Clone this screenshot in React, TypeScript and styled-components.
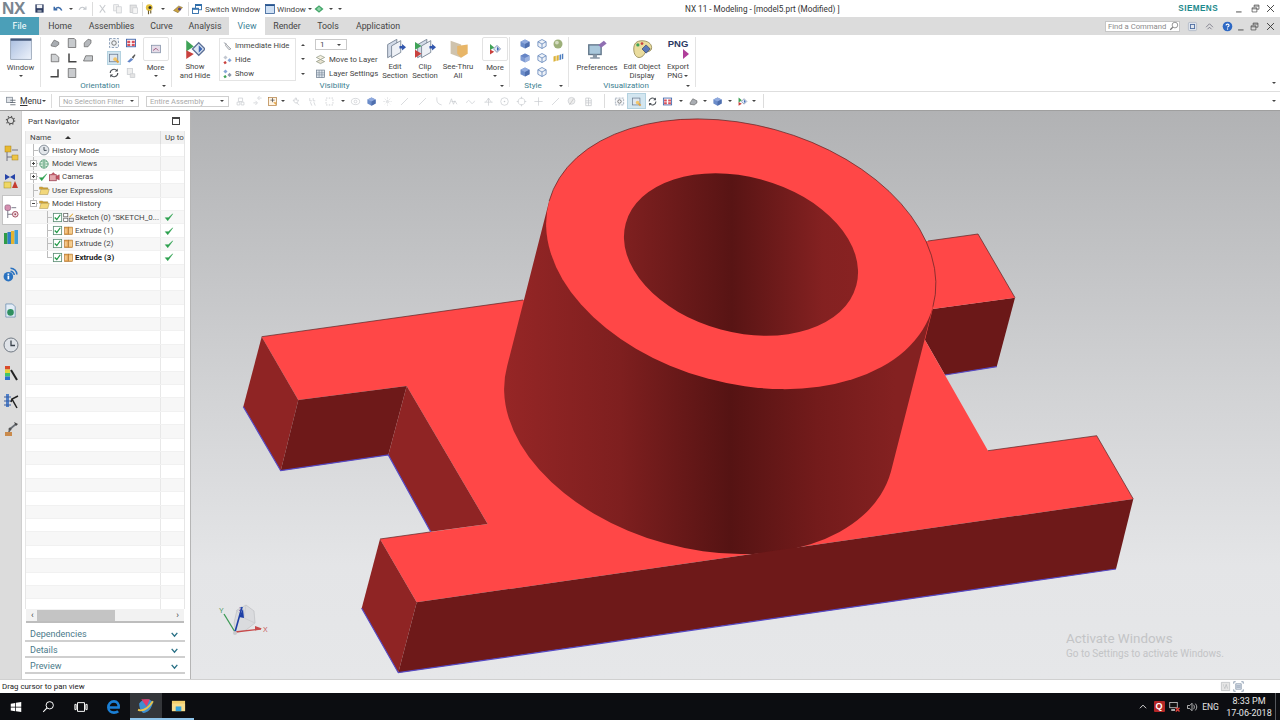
import React from 'react';
import styled, { createGlobalStyle } from 'styled-components';

const GlobalStyle = createGlobalStyle`
  html, body { margin: 0; padding: 0; background: #fff; overflow: hidden; }
  body { font-family: Roboto, "Liberation Sans", sans-serif; color: #444; }
  * { box-sizing: border-box; }
`;

const cube = (a: string, b: string, c: string) => (
  <>
    <path d="M8 2l6 3v6l-6 3-6-3V5z" fill={a} />
    <path d="M2 5l6 3 6-3-6-3z" fill={b} />
    <path d="M8 8v6l6-3V5z" fill={c} />
  </>
);
const wire = (
  <>
    <path d="M8 2l5.5 3v6L8 14l-5.5-3V5z" fill="#eef2f8" stroke="#5a7fb5" />
    <path d="M2.5 5L8 8l5.5-3M8 8v6" fill="none" stroke="#5a7fb5" />
  </>
);
const showHide = (
  <>
    <path d="M1 1l6 5-6 4z" fill="#3fa257" />
    <path d="M1 9l6 3-6 4z" fill="#c9413e" />
    <path d="M11 3l5 5-5 5-5-5z" fill="#dfe8f5" stroke="#5b6f96" />
    <path d="M11 5l3 3-3 3z" fill="#3d67b4" />
  </>
);
const section = (
  <>
    <path d="M2 5l7-4v10l-7 4z" fill="#d3dbe8" stroke="#7a8797" strokeWidth=".7" />
    <path d="M5 6l7-4v9l-7 4z" fill="#eef1f6" stroke="#7a8797" strokeWidth=".7" />
    <path d="M11 6h2V4.5l3 2.5-3 2.5V8h-2z" fill="#3156ad" />
  </>
);

const glyphs: Record<string, React.ReactNode> = {
  save: (
    <>
      <rect x="2" y="2" width="12" height="12" fill="#2b3a5f" />
      <rect x="4" y="2.5" width="8" height="5" fill="#f0f2f6" />
      <rect x="5" y="10" width="6" height="4" fill="#8f98ab" />
    </>
  ),
  undo: <path d="M3 5v4h4M4 9c2-4 7-4 9 1" fill="none" stroke="#3a6aa8" strokeWidth="2" />,
  redo: <path d="M13 5v4H9M12 9C10 5 5 5 3 10" fill="none" stroke="#c2c6cb" strokeWidth="1.6" />,
  cut: <path d="M4 14l8-11M12 14L4 3" fill="none" stroke="#c8cbcf" strokeWidth="1.5" />,
  copy: (
    <>
      <rect x="2.5" y="2.5" width="7" height="9" fill="#f2f2f2" stroke="#c8cbcf" />
      <rect x="6.5" y="5.5" width="7" height="9" fill="#f2f2f2" stroke="#c8cbcf" />
    </>
  ),
  paste: (
    <>
      <rect x="3" y="3" width="9" height="11" fill="#e3e3e3" stroke="#bfc2c6" />
      <rect x="7" y="7" width="7" height="8" fill="#f6f6f6" stroke="#c8cbcf" />
    </>
  ),
  wand: (
    <>
      <circle cx="7" cy="6" r="4.5" fill="#e5c23c" />
      <circle cx="8" cy="6" r="2" fill="#333" />
      <path d="M6 10v5M9 10v4" stroke="#6b5b2e" strokeWidth="1.5" />
    </>
  ),
  tag: (
    <>
      <path d="M2 10l7-6 5 2-6 7z" fill="#caa23e" stroke="#6d5c34" strokeWidth=".6" />
      <circle cx="10" cy="8" r="2" fill="#4f3f8f" />
    </>
  ),
  switchWin: (
    <>
      <rect x="6" y="2" width="8" height="7" fill="#fff" stroke="#2a6aa8" strokeWidth="1.2" />
      <rect x="2" y="7" width="8" height="7" fill="#fff" stroke="#2a6aa8" strokeWidth="1.2" />
      <path d="M2 8h8M6 3h8" stroke="#2a6aa8" strokeWidth="2" />
    </>
  ),
  winSmall: (
    <>
      <rect x="2" y="2" width="12" height="12" fill="#cfe0f4" stroke="#27548e" />
      <path d="M2 3h12" stroke="#27548e" strokeWidth="2" />
    </>
  ),
  greenDiamond: (
    <>
      <path d="M8 3l6 5-6 5-6-5z" fill="#45a76b" />
      <path d="M8 5l3 3-3 3-3-3z" fill="#8fd3a8" />
    </>
  ),
  windowBig: (
    <>
      <defs>
        <linearGradient id="winFill" x1="0" y1="0" x2="1" y2="1">
          <stop offset="0" stopColor="#a8bddf" />
          <stop offset="1" stopColor="#eef3fb" />
        </linearGradient>
      </defs>
      <rect x=".5" y=".5" width="15" height="15" fill="url(#winFill)" stroke="#7f8fa6" strokeWidth=".5" />
      <rect x=".5" y=".5" width="15" height="1.5" fill="#44587a" />
    </>
  ),
  viewIso: <path d="M3 10l4-6 6 3v3l-4 3-6-1z" fill="#a9adb2" stroke="#555" strokeWidth=".8" />,
  viewPage: <path d="M3 2h8l2 2v10H3z" fill="#c7cacd" stroke="#555" strokeWidth=".9" />,
  viewIso2: <path d="M3 13V8l5-5 4 1v4l-4 5z" fill="#b5b8bc" stroke="#555" strokeWidth=".8" />,
  viewFront: <path d="M3 3h6l4 4v6H3z" fill="#d0d2d4" stroke="#555" strokeWidth=".9" />,
  viewL: <path d="M4 2v11h10" fill="none" stroke="#444" strokeWidth="2" />,
  viewPara: <path d="M2 12l3-7h9v7z" fill="#c7cacd" stroke="#555" strokeWidth=".9" />,
  viewJ: <path d="M12 3v10H2" fill="none" stroke="#444" strokeWidth="2" />,
  viewRect: <path d="M3 2h10v12H3z" fill="#c9cbce" stroke="#555" strokeWidth=".9" />,
  fit: (
    <>
      <rect x="2" y="2" width="12" height="12" fill="#eef2f6" stroke="#6d87a5" strokeDasharray="3 2" />
      <circle cx="8" cy="8" r="3" fill="none" stroke="#555" />
    </>
  ),
  layout: (
    <>
      <rect x="2" y="3" width="12" height="10" fill="#fff" stroke="#3c62a8" strokeWidth="1.2" />
      <path d="M3 5h4v3H3zM9 5h4v3H9zM3 9h4v3H3zM9 9h4v3H9z" fill="#d9515b" />
    </>
  ),
  zoomBox: (
    <>
      <rect x="2" y="3" width="11" height="10" fill="#dfe7ef" stroke="#66778c" />
      <path d="M9 9l5 5" stroke="#e2a13c" strokeWidth="2.5" />
      <circle cx="9.5" cy="9.5" r="2.5" fill="#f2c66a" />
    </>
  ),
  brush: (
    <>
      <path d="M3 13l5-5 3 2-5 4z" fill="#6486c9" />
      <path d="M9 7l4-4 1 1-3 5z" fill="#555" />
    </>
  ),
  rotate: (
    <>
      <path d="M3 8a5 5 0 0 1 9-3M13 8a5 5 0 0 1-9 3" fill="none" stroke="#4a4f55" strokeWidth="1.5" />
      <path d="M13 2v4H9zM3 14v-4h4z" fill="#4a4f55" />
    </>
  ),
  fade: (
    <>
      <rect x="3" y="2" width="7" height="8" fill="#eee" stroke="#c8cbcf" />
      <path d="M7 9l6 0v5H7z" fill="#e4e4e4" stroke="#c8cbcf" />
    </>
  ),
  moreView: (
    <>
      <rect x="2" y="3" width="12" height="10" fill="#e5dce8" stroke="#7f8fa6" />
      <path d="M4 10l4-3 3 3" fill="none" stroke="#8f3b66" />
    </>
  ),
  showHide,
  moreShow: <g transform="translate(1.5 1.5) scale(.8)">{showHide}</g>,
  immediate: (
    <>
      <path d="M2 3l5 2-2 2z" fill="#a8adb5" />
      <path d="M6 6l7 7-3 1-5-6z" fill="#dfe3e9" stroke="#666" strokeWidth=".7" />
    </>
  ),
  hide: (
    <>
      <path d="M2 5l3-3 3 3-3 3z" fill="#c2c7d0" />
      <path d="M2 12l3-2 2 3-3 2z" fill="#c9413e" />
      <path d="M8 9l3-3 3 3-3 3z" fill="#87a7d8" />
    </>
  ),
  show: (
    <>
      <path d="M2 5l3-3 3 3-3 3z" fill="#87a7d8" />
      <path d="M2 12l3-2 2 3-3 2z" fill="#3fa257" />
      <path d="M8 10l3-3 3 3-3 3z" fill="#8a97aa" />
    </>
  ),
  moveLayer: (
    <>
      <path d="M2 5l6-3 6 3-6 3z" fill="#f4efe0" stroke="#6f7a63" strokeWidth=".8" />
      <path d="M2 11l6-3 6 3-6 3z" fill="#e7e2d0" stroke="#6f7a63" strokeWidth=".8" />
    </>
  ),
  layerSet: (
    <>
      <rect x="2" y="3" width="12" height="11" fill="#dfe6ee" stroke="#6a7a8c" />
      <path d="M6 3v11M10 3v11M2 7h12M2 10h12" stroke="#6a7a8c" strokeWidth=".8" />
    </>
  ),
  editSection: section,
  clipSection: (
    <>
      {section}
      <path d="M0 3l5 3-5 3z" fill="#3fa257" />
      <path d="M0 9l5 3-5 3z" fill="#c9413e" />
    </>
  ),
  seeThru: (
    <>
      <path d="M2 2l8 3v10l-8-3z" fill="#cfc3ad" />
      <path d="M7 6l8-1v7l-5 3-3-3z" fill="#e8b668" />
    </>
  ),
  preferences: (
    <>
      <rect x="2" y="5" width="9" height="7" fill="#aac8dc" stroke="#62768a" />
      <path d="M5 12h3v2h2v1H3v-1h2z" fill="#8a98a6" />
      <path d="M9 5l4-3 2 2-4 3z" fill="#8f6fb2" />
    </>
  ),
  palette: (
    <>
      <path d="M8 2c4 0 7 2 7 5s-3 3-4 3-1 3-4 4-5-2-5-6 2-6 6-6z" fill="#eadc9d" stroke="#8f8450" strokeWidth=".6" />
      <circle cx="5" cy="5" r="1.2" fill="#3fa257" />
      <circle cx="8" cy="4" r="1" fill="#c9413e" />
      <path d="M11 5l3 3-3 3-3-3z" fill="#5a78b8" stroke="#34456b" strokeWidth=".5" />
    </>
  ),
  cubeBlue: cube('#6b8cc9', '#90aade', '#4f6fae'),
  cubeBlue2: cube('#7f9bd3', '#6786c6', '#9db4e0'),
  wire,
  sphere: (
    <>
      <circle cx="8" cy="8" r="6" fill="#9db07a" />
      <circle cx="6.5" cy="6" r="2.5" fill="#d4dcc0" />
    </>
  ),
  stripes: (
    <>
      <path d="M2 6l3-1v7l-3 1zM6 5l3-1v7l-3 1z" fill="#dcb23a" />
      <path d="M10 4l2-1v7l-2 1zM13 3l2-1v7l-2 1z" fill="#4f7fc0" />
    </>
  ),
  ghostA: <path d="M5 3h6v5H5zM3 9h4v4H3zM9 9h4v4H9z" fill="none" stroke="#c8cbcf" />,
  ghostB: <path d="M2 10h5M5 7l3 3-3 3M9 3h5M11 6L8 3l3-3" fill="none" stroke="#c8cbcf" />,
  filterOn: (
    <>
      <rect x="2" y="2" width="12" height="12" fill="#fff4e4" stroke="#b07a3a" />
      <path d="M5 6h6M8 3v6" stroke="#444" />
      <path d="M9 9h4v4z" fill="#e4a23c" />
    </>
  ),
  ghostC: <path d="M3 6h3V3h2v3h3l-2 4H6zM8 10l4 3" fill="none" stroke="#c8cbcf" />,
  ghostD: <path d="M4 3v4h3M9 3v4h3M5 9l2 5M10 9l2 5" fill="none" stroke="#c8cbcf" />,
  dotted: <rect x="3" y="3" width="10" height="10" fill="none" stroke="#b9bcc0" strokeDasharray="2 2" />,
  ghostE: (
    <>
      <ellipse cx="8" cy="8" rx="6" ry="4.5" fill="none" stroke="#c8cbcf" />
      <circle cx="8" cy="8" r="2" fill="none" stroke="#c8cbcf" />
    </>
  ),
  ghostF: <path d="M8 2v12M2 8h12M4 4l8 8M12 4l-8 8" stroke="#d2d5d8" strokeDasharray="2 1.5" />,
  slash: <path d="M3 13L13 3" stroke="#c8cbcf" />,
  squiggle: <path d="M7 2c0 6 0 9 7 11" fill="none" stroke="#c8cbcf" />,
  zig: <path d="M2 12l3-8 3 8 2-5 3 5M5 8h6" fill="none" stroke="#c8cbcf" />,
  wave: <path d="M2 10c3-5 4-4 6-1s4 2 6-2" fill="none" stroke="#c8cbcf" />,
  tee: <path d="M8 3v11M2 9c3 0 9 0 12 0M4 9l4-6 4 6" fill="none" stroke="#c8cbcf" />,
  ringDot: (
    <>
      <circle cx="8" cy="8" r="5.5" fill="none" stroke="#c8cbcf" />
      <circle cx="8" cy="8" r="1.2" fill="#c8cbcf" />
    </>
  ),
  ringTick: <path d="M8 1v3M8 12v3M1 8h3M12 8h3M8 3a5 5 0 1 0 .01 0" fill="none" stroke="#c8cbcf" />,
  plus: <path d="M8 2v12M2 8h12" stroke="#c8cbcf" />,
  ghostG: (
    <>
      <circle cx="8" cy="7" r="5" fill="#eee" stroke="#c8cbcf" />
      <path d="M5 13l6-9" stroke="#bbb" />
    </>
  ),
  ghostH: <path d="M4 3h6l2 2v9H4zM4 7h8M4 10h8M8 3v11" fill="none" stroke="#c0c3c7" />,
  hexSel: (
    <>
      <rect x="2" y="3" width="12" height="10" fill="#f6f7f9" stroke="#8b98a8" strokeDasharray="3 1.5" />
      <circle cx="8" cy="8" r="2.5" fill="none" stroke="#555" />
    </>
  ),
  menuIcon: (
    <>
      <rect x="2" y="3" width="8" height="7" fill="#dfe3e8" stroke="#7d8793" />
      <path d="M7 7h7M7 10h7M7 13h7" stroke="#4c5560" />
    </>
  ),
  lens: (
    <>
      <circle cx="9.5" cy="6.5" r="4.5" fill="#fff" stroke="#777" strokeWidth="1.2" />
      <path d="M6 10l-4 4" stroke="#777" strokeWidth="2" />
    </>
  ),
  ribbonBox: (
    <>
      <rect x="2" y="2" width="12" height="12" rx="2" fill="#dfe5ee" stroke="#a7b1bf" />
      <rect x="5" y="5" width="6" height="6" fill="none" stroke="#4d6da0" strokeWidth="1.3" />
    </>
  ),
  chevUp: <path d="M3 9l5-5 5 5M5 12l3-3 3 3" fill="none" stroke="#667" strokeWidth="1.1" />,
  help: (
    <>
      <circle cx="8" cy="8" r="7" fill="#2d68c4" />
      <path d="M5.8 6.3C6 4 10.3 4 10.3 6.4c0 1.6-2.3 1.7-2.3 3.2" fill="none" stroke="#fff" strokeWidth="1.6" />
      <rect x="7.2" y="10.8" width="1.7" height="1.7" fill="#fff" />
    </>
  ),
  minimize: <path d="M3 13h8" stroke="#555" strokeWidth="1.5" />,
  restore: <path d="M3 7h7v6H3zM3 8.5h7M6 6V3h7v6h-3M6 4.5h7" fill="none" stroke="#444" />,
  close: <path d="M3 3l10 10M13 3L3 13" stroke="#333" strokeWidth="1.3" />,
  gear: (
    <>
      <circle cx="8" cy="8" r="4.5" fill="none" stroke="#555" strokeWidth="1.5" />
      <circle cx="8" cy="8" r="6" fill="none" stroke="#555" strokeWidth="1.8" strokeDasharray="1.8 2.9" />
    </>
  ),
  railAssembly: (
    <>
      <rect x="2" y="1" width="6" height="6" fill="#e8b92f" stroke="#a6801c" strokeWidth=".5" />
      <rect x="9" y="10" width="6" height="5" fill="#eec545" stroke="#a6801c" strokeWidth=".5" />
      <path d="M4 7v9M4 12h5M9 5h6" stroke="#667" strokeWidth=".9" />
    </>
  ),
  railConstraint: (
    <>
      <path d="M2 1l5 3 5-3v6l-5-3-5 3z" fill="#2744a8" />
      <rect x="1" y="9" width="7" height="6" fill="#efd764" stroke="#9c8b2a" strokeWidth=".5" />
      <path d="M9 15l3-7 3 7z" fill="#c43c30" />
    </>
  ),
  railPart: (
    <>
      <rect x="1" y="2" width="6" height="6" rx="2" fill="#d58fb0" stroke="#7a4c6d" strokeWidth=".6" />
      <path d="M4 8v8M4 12h5M8 5h5" stroke="#667" strokeWidth=".9" />
      <circle cx="12" cy="12" r="3" fill="#f2e0e4" stroke="#a04a5c" />
      <circle cx="12" cy="12" r="1" fill="#a04a5c" />
    </>
  ),
  railBooks: (
    <>
      <rect x="1" y="4" width="3.5" height="11" fill="#2f9b47" />
      <rect x="4.5" y="3" width="3.5" height="12" fill="#2f7fc8" />
      <rect x="8" y="2" width="3.5" height="13" fill="#e3b32f" />
      <rect x="11.5" y="1" width="3.5" height="14" fill="#3f9ed8" />
    </>
  ),
  railInfo: (
    <>
      <circle cx="6" cy="11" r="4.5" fill="#2a72c0" />
      <rect x="5.2" y="10" width="1.6" height="3.5" fill="#fff" />
      <rect x="5.2" y="8" width="1.6" height="1.3" fill="#fff" />
      <path d="M8 3a6 6 0 0 1 6 6M8 6a3.5 3.5 0 0 1 3.5 3.5" fill="none" stroke="#2a72c0" strokeWidth="1.5" />
    </>
  ),
  railDoc: (
    <>
      <path d="M3 1h7l3 3v11H3z" fill="#e3edf7" stroke="#6a8cb0" strokeWidth=".8" />
      <circle cx="8" cy="10" r="3.5" fill="#2f8f5f" />
    </>
  ),
  railClock: (
    <>
      <circle cx="8" cy="8" r="7" fill="#dfe3e8" stroke="#727a84" />
      <path d="M8 3.5V8.5h4" fill="none" stroke="#39424c" strokeWidth="1.3" />
    </>
  ),
  railSpectrum: (
    <>
      <rect x="2" y="1" width="5" height="3.5" fill="#d94a2a" />
      <rect x="2" y="4.5" width="5" height="3.5" fill="#e3d43a" />
      <rect x="2" y="8" width="5" height="3.5" fill="#3fc46a" />
      <rect x="2" y="11.5" width="5" height="3.5" fill="#2a6fd0" />
      <path d="M8 5l6 10" stroke="#222" strokeWidth="2" />
    </>
  ),
  railVector: (
    <>
      <path d="M3 1h3v13H3z" fill="#4f7fc8" />
      <path d="M1 4h7M1 8h7M1 12h7" stroke="#3a5fa0" />
      <path d="M15 3L9 6l5 9M9 6l-1 3" fill="none" stroke="#222" strokeWidth="1.5" />
    </>
  ),
  railRobot: (
    <>
      <path d="M5 14l2-6 6-5" fill="none" stroke="#6a6f76" strokeWidth="1.8" />
      <path d="M11 1l4 2-2 2z" fill="#444" />
      <rect x="2" y="11" width="7" height="4" fill="#c98a4c" />
      <circle cx="7" cy="8" r="1.5" fill="#555" />
    </>
  ),
  clock: (
    <>
      <circle cx="8" cy="8" r="6.5" fill="#e2e6ea" stroke="#6a7480" />
      <path d="M8 4v4.5h3.5" fill="none" stroke="#39424c" strokeWidth="1.2" />
    </>
  ),
  globe: (
    <>
      <circle cx="8" cy="8" r="5.5" fill="#dcefe0" stroke="#3f8f64" />
      <path d="M2 8h12M8 2v12M4 4c3 2 5 2 8 0M4 12c3-2 5-2 8 0" fill="none" stroke="#3f8f64" strokeWidth=".8" />
    </>
  ),
  camera: (
    <>
      <rect x="2" y="5" width="9" height="8" fill="#e3a8ae" stroke="#963748" />
      <path d="M11 7l4-2v7l-4-2zM4 5l3-3 3 3" fill="#c25262" stroke="#963748" strokeWidth=".6" />
    </>
  ),
  folderOpen: (
    <>
      <path d="M2 4h4l1 1h6v2H2z" fill="#d9a93a" stroke="#8a6d20" strokeWidth=".5" />
      <path d="M2 14l2-7h11l-2 7z" fill="#f2d77a" stroke="#8a6d20" strokeWidth=".5" />
    </>
  ),
  sketch: (
    <>
      <rect x="1" y="2" width="6" height="5" fill="#fff" stroke="#555" />
      <rect x="1" y="9" width="6" height="5" fill="#fff" stroke="#555" />
      <rect x="9" y="9" width="6" height="5" fill="#dfe3e8" stroke="#555" />
      <path d="M9 7l5-5 1 1-5 5z" fill="#e3a82f" />
    </>
  ),
  extrude: (
    <>
      <rect x="2" y="3" width="6" height="11" fill="#e7a04a" stroke="#9b6320" strokeWidth=".7" />
      <rect x="8" y="3" width="6" height="11" fill="#f0b868" stroke="#9b6320" strokeWidth=".7" />
      <path d="M3.5 5v7M5.5 5v7M10 5v7M12 5v7" stroke="#fff2d8" strokeWidth=".8" />
    </>
  ),
  boxCheck: (
    <>
      <rect x="2" y="2" width="12" height="12" fill="#fff" stroke="#5d8f75" strokeWidth="1.2" />
      <path d="M4 8l3 3 5-7" fill="none" stroke="#1f9a45" strokeWidth="1.8" />
    </>
  ),
  tick: <path d="M2 9l4 5 8-11-7 6z" fill="#2ca04e" stroke="#2ca04e" strokeWidth=".8" />,
  chevDown: <path d="M3 5l5 6 5-6" fill="none" stroke="#2a7186" strokeWidth="2.4" />,
  winLogo: <path d="M1 3.5l6-1v5H1zM8 2.3l7-1.1V7.5H8zM1 8.5h6v5l-6-1zM8 8.5h7v6.3l-7-1.1z" fill="#fff" />,
  search: (
    <>
      <circle cx="9.5" cy="6.5" r="4.5" fill="none" stroke="#fff" strokeWidth="1.2" />
      <path d="M6.2 9.8L1.5 14.5" stroke="#fff" strokeWidth="1.3" />
    </>
  ),
  taskView: <path d="M4 3h8v10H4zM1 5h1.5v6H1zM13.5 5H15v6h-1.5z" fill="none" stroke="#fff" strokeWidth="1.1" />,
  edge: <path d="M3 9h10.5C14 5 11.500 2.5 8.5 2.5 5 2.5 2.5 5.2 2.5 9c0 3.5 3 5.5 6 5.500 2 0 3.5-.6 4.500-1.500" fill="none" stroke="#1b7fd6" strokeWidth="2.8" />,
  nxApp: (
    <>
      <path d="M2 6c4-5 10-5 13-1-1 6-5 10-9 10C3 13 2 9 2 6z" fill="#3f8fd0" />
      <path d="M4 2l8 0-3 7z" fill="#e03c6c" />
      <path d="M1 12c5 2 10-2 14-8" fill="none" stroke="#e8c24a" strokeWidth="1.8" />
    </>
  ),
  explorer: (
    <>
      <rect x="1" y="3" width="14" height="11" fill="#f2cf6c" />
      <rect x="1" y="6" width="14" height="8" fill="#f7dd8c" />
      <rect x="5" y="9" width="6" height="5" fill="#35a4dc" />
    </>
  ),
  caretUp: <path d="M3 10l5-5 5 5" fill="none" stroke="#fff" strokeWidth="1.3" />,
  netTray: (
    <>
      <rect x="1" y="2" width="10" height="7" fill="#111" stroke="#ddd" />
      <path d="M3 11h5v2H3z" fill="#ddd" />
      <path d="M9 9l5 5M14 9l-5 5" stroke="#e0403a" strokeWidth="1.8" />
    </>
  ),
  speaker: <path d="M2 6h3l3-3v10l-3-3H2zM10 5c1.5 2 1.5 4 0 6M12.5 3.5c2.5 3 2.5 6 0 9" fill="none" stroke="#ddd" />,
  statusA: <path d="M2 2h12v12H2zM5 5l2 6 2-6 2 6" fill="#e5e5e5" stroke="#a8acb0" strokeWidth=".8" />,
  statusB: <path d="M1 4V1h3M12 1h3v3M15 12v3h-3M4 15H1v-3M4 4h8v8H4zM5 7h6M5 9h6" fill="#dfe5ee" stroke="#6d8098" strokeWidth=".9" />,
};

const Svg = styled.svg<{ $s: number }>`
  width: ${({ $s }) => $s}px;
  height: ${({ $s }) => $s}px;
  flex-shrink: 0;
  display: block;
`;

function Glyph({ name, size = 12 }: { name: string; size?: number }) {
  return (
    <Svg $s={size} viewBox="0 0 16 16">
      {glyphs[name]}
    </Svg>
  );
}

const Page = styled.div`
  width: 1280px;
  height: 720px;
  display: flex;
  flex-direction: column;
  font-size: 8px;
  overflow: hidden;
`;

const TitleBar = styled.div`
  height: 17px;
  display: flex;
  align-items: center;
  background: #fff;
  flex-shrink: 0;
`;
const QuickAccess = styled.div`
  width: 685px;
  height: 100%;
  display: flex;
  align-items: center;
  padding-left: 2px;
`;
const Logo = styled.span`
  width: 28px;
  font: 700 17px/17px "Liberation Sans", sans-serif;
  color: #79858f;
  letter-spacing: -0.3px;
`;
const Slot = styled.span<{ $w: number; $active?: boolean }>`
  width: ${({ $w }) => $w}px;
  height: 16px;
  flex-shrink: 0;
  display: flex;
  align-items: center;
  justify-content: center;
  ${({ $active }) => ($active ? 'background: #d3e6f0; outline: 1px solid #b4d2e0; outline-offset: -1px;' : '')}
`;
const Caret = styled.i<{ $w?: number }>`
  width: ${({ $w }) => $w ?? 6}px;
  flex-shrink: 0;
  display: flex;
  justify-content: center;
  &::after {
    content: '';
    border: 2px solid transparent;
    border-top: 2.5px solid #444;
    border-bottom: 0;
  }
`;
const UpCaret = styled(Caret)`
  transform: rotate(180deg);
`;
const VSep = styled.span<{ $w?: number }>`
  width: ${({ $w }) => $w ?? 2}px;
  height: 14px;
  flex-shrink: 0;
  display: flex;
  justify-content: center;
  &::after {
    content: '';
    width: 1px;
    background: #dcdcdc;
  }
`;
const QuickLabel = styled.span<{ $w: number }>`
  width: ${({ $w }) => $w}px;
  font-size: 8.1px;
  color: #444;
  white-space: nowrap;
`;
const DocTitle = styled.span`
  font-size: 8.2px;
  color: #333;
  white-space: nowrap;
`;
const Siemens = styled.span`
  margin-left: auto;
  font: 700 8.2px "Liberation Sans", sans-serif;
  letter-spacing: 0.4px;
  color: #1d8a8c;
`;
const WindowButtons = styled.div`
  display: flex;
  align-items: center;
  padding: 0 3px 0 13px;
`;

const TabBar = styled.div`
  height: 18px;
  display: flex;
  align-items: stretch;
  background: #dcdcdc;
  flex-shrink: 0;
`;
const FileTab = styled.div`
  width: 39px;
  background: #4b9fb8;
  color: #fff;
  display: flex;
  align-items: center;
  justify-content: center;
  font-size: 8.8px;
`;
const Tab = styled.div<{ $active?: boolean; $w: number }>`
  width: ${({ $w }) => $w}px;
  display: flex;
  align-items: center;
  justify-content: center;
  font-size: 8.8px;
  color: ${({ $active }) => ($active ? '#3b7f96' : '#444')};
  background: ${({ $active }) => ($active ? '#fff' : 'transparent')};
`;
const TabRight = styled.div`
  margin-left: auto;
  display: flex;
  align-items: center;
  padding-right: 3px;
`;
const FindBox = styled.div`
  width: 75px;
  height: 11px;
  background: #fff;
  border: 1px solid #c6c6c6;
  color: #8a8a8a;
  font-size: 7.7px;
  padding-left: 2px;
  display: flex;
  align-items: center;
  justify-content: space-between;
  margin-right: 4px;
`;

const Ribbon = styled.div`
  height: 57px;
  display: flex;
  background: #fff;
  border-bottom: 1px solid #dedede;
  flex-shrink: 0;
`;
const Group = styled.div<{ $w: number }>`
  width: ${({ $w }) => $w}px;
  display: flex;
  flex-direction: column;
  background: linear-gradient(#e3e3e3, #e3e3e3) right 2px / 1px 50px no-repeat;
`;
const GroupBody = styled.div<{ $pad?: number }>`
  height: 45px;
  display: flex;
  padding-left: ${({ $pad }) => $pad ?? 0}px;
`;
const GroupFoot = styled.div`
  height: 11px;
  display: flex;
  align-items: center;
  padding-right: 4px;
`;
const GroupName = styled.span`
  flex: 1;
  text-align: center;
  font-size: 8px;
  color: #3c8090;
`;
const BigButton = styled.div<{ $w: number; $ml?: number }>`
  width: ${({ $w }) => $w}px;
  margin-left: ${({ $ml }) => $ml ?? 0}px;
  flex-shrink: 0;
  display: flex;
  flex-direction: column;
  align-items: center;
  font-size: 7.7px;
  line-height: 9px;
  text-align: center;
  color: #444;
  padding-top: 2px;
`;
const BigIcon = styled.div<{ $boxed?: boolean }>`
  height: 24px;
  width: 100%;
  display: flex;
  align-items: center;
  justify-content: center;
  ${({ $boxed }) => ($boxed ? 'border: 1px solid #e2e2e2; border-radius: 2px;' : '')}
`;
const BigLabel = styled.div`
  margin-top: 2px;
  white-space: pre-line;
`;
const LabelCaret = styled(Caret)`
  width: 100%;
  margin-top: 3px;
`;
const InlineLabel = styled.span`
  display: inline-flex;
  align-items: center;
`;
const IconGrid = styled.div<{ $cols: number; $cell: number; $rowH?: number; $ml?: number; $pt?: number }>`
  display: grid;
  grid-template-columns: repeat(${({ $cols }) => $cols}, ${({ $cell }) => $cell}px);
  grid-auto-rows: ${({ $rowH }) => $rowH ?? 15}px;
  margin-left: ${({ $ml }) => $ml ?? 0}px;
  padding-top: ${({ $pt }) => $pt ?? 0}px;
  align-items: center;
  justify-items: center;
`;
const GridCell = styled.span<{ $active?: boolean }>`
  width: 14px;
  height: 14px;
  display: flex;
  align-items: center;
  justify-content: center;
  ${({ $active }) => ($active ? 'background: #d3e6f0; outline: 1px solid #b4d2e0; outline-offset: -1px;' : '')}
`;
const HideList = styled.div`
  width: 77px;
  height: 43px;
  margin: 3px 0 0 5px;
  border: 1px solid #e4e4e4;
  display: flex;
  flex-direction: column;
`;
const HideItem = styled.div`
  height: 14.6px;
  padding-left: 2px;
  display: flex;
  align-items: center;
  gap: 2px;
  white-space: nowrap;
  font-size: 7.7px;
`;
const ListScroll = styled.div`
  width: 13px;
  height: 43px;
  margin-top: 3px;
  display: flex;
  flex-direction: column;
  align-items: center;
  justify-content: space-around;
`;
const LayerColumn = styled.div`
  width: 71px;
  padding: 4px 0 0 6px;
  display: flex;
  flex-direction: column;
  font-size: 7.8px;
`;
const LayerSelect = styled.div`
  width: 32px;
  height: 11px;
  border: 1px solid #c9c9c9;
  padding: 0 4px;
  display: flex;
  align-items: center;
  justify-content: space-between;
  font-size: 8px;
  margin-bottom: 2px;
`;
const LayerRow = styled.div`
  height: 15px;
  display: flex;
  align-items: center;
  gap: 3px;
  white-space: nowrap;
`;
const PngMark = styled.div`
  font: 700 9.5px/11px "Liberation Sans", sans-serif;
  color: #2c3a63;
  display: flex;
  flex-direction: column;
  align-items: center;
  &::after {
    content: '';
    border: 5px solid transparent;
    border-left: 6px solid #b03f9a;
    border-right: 0;
    margin-left: 16px;
  }
`;
const RibbonEnd = styled.div`
  margin-left: auto;
  padding: 0 3px 7px 0;
  display: flex;
  align-items: flex-end;
`;

const SelectionBar = styled.div`
  height: 19px;
  display: flex;
  align-items: center;
  background: #fff;
  flex-shrink: 0;
  padding-left: 5px;
  border-bottom: 1px solid #9f9f9f;
`;
const MenuLabel = styled.span`
  width: 21px;
  margin-left: 3px;
  font-size: 8.6px;
  color: #333;
  &::first-letter {
    text-decoration: underline;
  }
`;
const FilterSelect = styled.div<{ $w: number; $ml: number }>`
  width: ${({ $w }) => $w}px;
  height: 11px;
  margin-left: ${({ $ml }) => $ml}px;
  flex-shrink: 0;
  border: 1px solid #cfcfcf;
  padding: 0 3px;
  color: #a9a9a9;
  font-size: 7.5px;
  display: flex;
  align-items: center;
  justify-content: space-between;
  white-space: nowrap;
`;
const BarEnd = styled.span`
  margin-left: auto;
  padding-right: 3px;
`;

const Workspace = styled.div`
  flex: 1;
  min-height: 0;
  display: flex;
`;
const Rail = styled.div`
  width: 21px;
  background: #dcdcdc;
  display: flex;
  flex-direction: column;
  flex-shrink: 0;
`;
const RailItem = styled.div<{ $top: number; $h?: number; $active?: boolean }>`
  height: ${({ $h }) => $h ?? 22}px;
  margin-top: ${({ $top }) => $top}px;
  margin-left: ${({ $active }) => ($active ? 2 : 0)}px;
  padding-right: ${({ $active }) => ($active ? 2 : 0)}px;
  flex-shrink: 0;
  display: flex;
  align-items: center;
  justify-content: center;
  ${({ $active }) => ($active ? 'background: #fff; border: 1px solid #c4c4c4; border-right: 0;' : '')}
`;
const Panel = styled.div`
  width: 170px;
  flex-shrink: 0;
  background: #fff;
  border-right: 1px solid #b5b5b5;
  border-left: 1px solid #cfcfcf;
  padding: 0 5px 5px 3px;
  display: flex;
  flex-direction: column;
`;
const PanelHead = styled.div`
  height: 20px;
  padding-left: 3px;
  display: flex;
  align-items: center;
  justify-content: space-between;
  font-size: 8px;
  flex-shrink: 0;
  color: #444;
`;
const MaxBox = styled.span`
  width: 8px;
  height: 8px;
  border: 1px solid #444;
  border-top-width: 2px;
  margin-right: 5px;
`;
const Table = styled.div`
  flex: 1;
  min-height: 0;
  overflow: hidden;
  border-left: 1px solid #e6e6e6;
  border-right: 1px solid #e6e6e6;
`;
const HeadRow = styled.div`
  height: 13px;
  display: grid;
  grid-template-columns: 134px 1fr;
  background: #f2f2f2;
  font-size: 8px;
  line-height: 13px;
`;
const HeadCell = styled.div`
  padding-left: 4px;
  white-space: nowrap;
  overflow: hidden;
`;
const NameHead = styled(HeadCell)`
  display: flex;
  align-items: center;
  gap: 14px;
  &::after {
    content: '';
    border: 3px solid transparent;
    border-bottom: 3px solid #333;
    border-top: 0;
  }
`;
const StateHead = styled(HeadCell)`
  border-left: 1px solid #ddd;
`;
const Row = styled.div<{ $odd: boolean }>`
  height: 13.4px;
  display: grid;
  grid-template-columns: 134px 1fr;
  background: ${({ $odd }) => ($odd ? '#f7f7f7' : '#fff')};
  border-bottom: 1px solid #f1f1f1;
`;
const NameCell = styled.div<{ $bold?: boolean }>`
  height: 100%;
  display: flex;
  align-items: center;
  padding-left: 1px;
  font-size: 7.9px;
  white-space: nowrap;
  font-weight: ${({ $bold }) => ($bold ? 700 : 400)};
  color: ${({ $bold }) => ($bold ? '#222' : '#444')};
`;
const StateCell = styled.div`
  border-left: 1px solid #e8e8e8;
  display: flex;
  align-items: center;
  padding-left: 3px;
`;
const TreeCell = styled.span<{ $w: number; $x: number; $v?: 'full' | 'half'; $h?: boolean }>`
  width: ${({ $w }) => $w}px;
  height: 100%;
  flex-shrink: 0;
  display: flex;
  align-items: center;
  padding-left: ${({ $x }) => $x - 3}px;
  background:
    ${({ $h, $x }) => ($h ? `linear-gradient(#bdbdbd, #bdbdbd) ${$x}px 50% / 7px 1px no-repeat,` : '')}
    ${({ $v, $x }) =>
      $v ? `linear-gradient(#bdbdbd, #bdbdbd) ${$x}px 0 / 1px ${$v === 'full' ? '100%' : '50%'} no-repeat` : 'none'};
`;
const Expander = styled.span<{ $open?: boolean }>`
  width: 7px;
  height: 7px;
  border: 1px solid #bbb;
  display: block;
  background:
    linear-gradient(#444, #444) 50% 50% / 3px 1px no-repeat,
    ${({ $open }) => ($open ? '' : 'linear-gradient(#444, #444) 50% 50% / 1px 3px no-repeat,')} #fff;
`;
const RowText = styled.span<{ $ml?: number }>`
  margin-left: ${({ $ml }) => $ml ?? 2}px;
`;
const ScrollBar = styled.div`
  height: 14px;
  flex-shrink: 0;
  background: #f2f2f2;
  display: flex;
  align-items: center;
  justify-content: space-between;
  padding: 0 5px;
  font-size: 9px;
  color: #444;
  margin: 0 1px 3px;
  border-bottom: 2px solid #bdbdbd;
`;
const Thumb = styled.span`
  width: 78px;
  height: 11px;
  background: #c4c4c4;
  margin: 0 auto 0 3px;
`;
const Section = styled.div`
  height: 16px;
  flex-shrink: 0;
  border-bottom: 2px solid #cfcfcf;
  padding: 2px 6px 0 5px;
  display: flex;
  align-items: center;
  justify-content: space-between;
  font-size: 9px;
  color: #4b7a8a;
`;

const Viewport = styled.div`
  flex: 1;
  min-width: 0;
  position: relative;
`;
const Scene = styled.svg`
  width: 100%;
  height: 100%;
  display: block;
`;
const Watermark = styled.div`
  position: absolute;
  left: 875px;
  top: 520px;
  color: #c3c4c6;
  font-size: 10px;
  line-height: 14px;
  white-space: nowrap;
`;
const WatermarkTitle = styled.div`
  font-size: 13.4px;
  line-height: 16px;
`;

const StatusBar = styled.div`
  height: 14px;
  flex-shrink: 0;
  background: #fff;
  border-top: 1px solid #d0d0d0;
  display: flex;
  align-items: center;
  padding: 0 36px 1px 2px;
  font-size: 7.9px;
  color: #222;
`;
const StatusIcons = styled.div`
  margin-left: auto;
  display: flex;
  gap: 2px;
`;
const Taskbar = styled.div`
  height: 27px;
  flex-shrink: 0;
  background: #0c0d11;
  display: flex;
  align-items: stretch;
`;
const TaskButton = styled.div<{ $active?: boolean; $open?: boolean }>`
  width: 32.4px;
  display: flex;
  align-items: center;
  justify-content: center;
  background: ${({ $active }) => ($active ? '#34363a' : 'transparent')};
  ${({ $open }) => ($open ? 'border-bottom: 2px solid #8fc4ea;' : '')}
`;
const Tray = styled.div`
  margin-left: auto;
  display: flex;
  align-items: center;
  color: #e6e6e6;
`;
const TraySlot = styled.div<{ $w: number }>`
  width: ${({ $w }) => $w}px;
  display: flex;
  justify-content: center;
  align-items: center;
  font-size: 8.5px;
`;
const QBadge = styled.span`
  width: 11px;
  height: 11px;
  background: #b32626;
  color: #fff;
  font: 700 9px/11px "Liberation Sans", sans-serif;
  text-align: center;
  border-radius: 1px;
`;
const Clock = styled.div`
  width: 50px;
  margin-left: 4px;
  text-align: center;
  font-size: 9px;
  line-height: 12px;
`;
const DesktopEdge = styled.span`
  width: 1px;
  height: 100%;
  background: #55575c;
  margin: 0 4px 0 1px;
`;

const topRows = [
  { id: 'hist', open: null, icons: ['clock'], label: 'History Mode' },
  { id: 'views', open: false, icons: ['globe'], label: 'Model Views' },
  { id: 'cams', open: false, icons: ['tick', 'camera'], label: 'Cameras' },
  { id: 'expr', open: null, icons: ['folderOpen'], label: 'User Expressions' },
  { id: 'hist2', open: true, icons: ['folderOpen'], label: 'Model History' },
];
const features = [
  { icon: 'sketch', label: 'Sketch (0) "SKETCH_0...' },
  { icon: 'extrude', label: 'Extrude (1)' },
  { icon: 'extrude', label: 'Extrude (2)' },
  { icon: 'extrude', label: 'Extrude (3)', bold: true },
];

const toolbar: [string, number][] = [
  ['ghostA', 16], ['ghostB', 18], ['filterOn', 12], ['^', 10], ['ghostC', 17], ['ghostD', 15], ['dotted', 19], ['^', 8],
  ['ghostE', 16], ['cubeBlue', 17], ['ghostF', 15], ['slash', 19], ['slash', 16], ['squiggle', 15], ['zig', 16],
  ['wave', 19], ['tee', 16], ['ringDot', 17], ['ringTick', 17], ['plus', 17], ['slash', 16], ['ghostG', 16], ['ghostH', 18],
  ['|', 14], ['hexSel', 16], ['*zoomBox', 19], ['rotate', 13], ['layout', 17], ['^', 10], ['viewIso', 14],
  ['^', 10], ['cubeBlue', 15], ['^', 10], ['moreShow', 14], ['^', 10], ['|', 8],
];

const railItems = [
  { name: 'gear', top: 0, h: 18, size: 11 },
  { name: 'railAssembly', top: 13, size: 16 },
  { name: 'railConstraint', top: 6, size: 16 },
  { name: 'railPart', top: 3, h: 30, size: 15, active: true },
  { name: 'railBooks', top: 1, size: 16 },
  { name: 'railInfo', top: 14, size: 17 },
  { name: 'railDoc', top: 15, size: 15 },
  { name: 'railClock', top: 13, size: 16 },
  { name: 'railSpectrum', top: 6, size: 16 },
  { name: 'railVector', top: 6, size: 16 },
  { name: 'railRobot', top: 6, size: 16 },
];

function Part() {
  return (
    <Scene viewBox="191 111 1089 568" preserveAspectRatio="none">
      <defs>
        <linearGradient id="sky" x1="0" y1="0" x2="0" y2="1">
          <stop offset="0" stopColor="#b1b2b4" />
          <stop offset=".5" stopColor="#d2d3d5" />
          <stop offset=".8" stopColor="#e4e5e7" />
          <stop offset="1" stopColor="#e6e7e9" />
        </linearGradient>
        <linearGradient id="wall" gradientUnits="userSpaceOnUse" x1="503" y1="0" x2="895" y2="0">
          <stop offset="0" stopColor="#962626" />
          <stop offset=".3" stopColor="#7e1f1f" />
          <stop offset=".58" stopColor="#551313" />
          <stop offset=".8" stopColor="#731b1b" />
          <stop offset="1" stopColor="#842121" />
        </linearGradient>
        <linearGradient id="bore" gradientUnits="userSpaceOnUse" x1="624" y1="0" x2="858" y2="0">
          <stop offset="0" stopColor="#7f2020" />
          <stop offset=".46" stopColor="#581414" />
          <stop offset=".85" stopColor="#842121" />
          <stop offset="1" stopColor="#882222" />
        </linearGradient>
      </defs>
      <rect x="191" y="111" width="1089" height="568" fill="url(#sky)" />

      <path d="M932.7 309L1015 297.7 996.7 366.7 945 375 925 340 915 320z" fill="#6b1818" />
      <path d="M261.7 336.7L523 300 928 241 978 234 1015 297.7 932.7 309 925 340 988 450.7 1096.7 435.7 1133.3 499 416.7 602.3 380 539 487.7 524 406.7 386 298.3 400z" fill="#ff4747" />
      <path d="M261.7 336.7L298.3 400 280.7 470.7 243.3 406.7z" fill="#8f2424" />
      <path d="M298.3 400L406.7 386 388.3 455 280.7 470.7z" fill="#6e1919" />
      <path d="M406.7 386L487.7 524 430.7 531.7 388.3 455z" fill="#8f2424" />

      <path d="M549.1 201.2L507.1 366.2A199 129 15.4 0 0 890.9 471.8L932.9 306.8z" fill="url(#wall)" />

      <path d="M380 539L416.7 602.3 398.3 672.7 361.7 608.3z" fill="#8f2424" />
      <path d="M416.7 602.3L1133.3 499 1116 569 398.3 672.7z" fill="#6e1919" />

      <g fill="none" stroke="#5548c4" strokeWidth="1.2">
        <path d="M243.3 406.7L280.7 470.7 388.3 455 430.7 531.7" />
        <path d="M361.7 608.3L398.3 672.7 1116 569" />
        <path d="M945 375L996.7 366.7" />
      </g>
      <g fill="none" stroke="#5a2424" strokeWidth=".7">
        <path d="M261.7 336.7L523 300M928 241L978 234 1015 297.7M988 450.7L1096.7 435.7 1133.3 499M380 539L430 532" />
      </g>

      <ellipse cx="0" cy="0" rx="199" ry="129" transform="translate(741 254) rotate(15.4)" fill="#ff4747" />
      <path d="M549.1 201.2A199 129 15.4 0 1 932.9 306.8" fill="none" stroke="#5a2424" strokeWidth=".7" />
      <path d="M625.7 223.4A119.4 77.7 15.1 1 0 856.3 285.6A119.4 77.7 15.1 1 0 625.7 223.4z" fill="url(#bore)" />

      <path d="M236 633l-2-10 3-13 9-5 8 6 1 12-9 7z" fill="#dadbde" stroke="#b9babd" strokeWidth=".6" />
      <path d="M246 605l-2 13-8-8M244 618l11 5" fill="none" stroke="#c6c7ca" strokeWidth=".6" />
      <path d="M235 632l-11-18" stroke="#3c9a54" strokeWidth="1.3" />
      <path d="M235 632l26-3" stroke="#c84a4a" strokeWidth="1.3" />
      <path d="M255 626l7 2.5-7 2z" fill="#c84a4a" />
      <path d="M235 632l7-25" stroke="#1d3fa6" strokeWidth="1.6" />
      <path d="M239 617l4-8 1 9z" fill="#1d3fa6" />
      <circle cx="235" cy="633" r="2" fill="#c9cacc" />
      <text x="219" y="613" fontSize="7" fill="#4f9a62" fontFamily="Liberation Sans">Y</text>
      <text x="263" y="632" fontSize="7" fill="#c85a5a" fontFamily="Liberation Sans">X</text>
      <text x="239" y="611" fontSize="6" fill="#2a4ab0" fontFamily="Liberation Sans">Z</text>
    </Scene>
  );
}

export default function App() {
  return (
    <Page>
      <GlobalStyle />
      <TitleBar>
        <QuickAccess>
          <Logo>NX</Logo>
          <Slot $w={18}><Glyph name="save" size={11} /></Slot>
          <Slot $w={20}><Glyph name="undo" size={12} /></Slot>
          <Caret />
          <Slot $w={16}><Glyph name="redo" size={11} /></Slot>
          <VSep $w={4} />
          <Slot $w={16}><Glyph name="cut" size={11} /></Slot>
          <Slot $w={15}><Glyph name="copy" size={11} /></Slot>
          <Slot $w={16}><Glyph name="paste" size={11} /></Slot>
          <VSep />
          <Slot $w={14}><Glyph name="wand" size={12} /></Slot>
          <Caret $w={12} />
          <Slot $w={18}><Glyph name="tag" size={12} /></Slot>
          <VSep />
          <Slot $w={16}><Glyph name="switchWin" size={12} /></Slot>
          <QuickLabel $w={58}>Switch Window</QuickLabel>
          <Slot $w={14}><Glyph name="winSmall" size={12} /></Slot>
          <QuickLabel $w={30}>Window</QuickLabel>
          <Caret />
          <Slot $w={12}><Glyph name="greenDiamond" size={12} /></Slot>
          <Caret $w={12} />
          <Caret />
        </QuickAccess>
        <DocTitle>NX 11 - Modeling - [model5.prt (Modified) ]</DocTitle>
        <Siemens>SIEMENS</Siemens>
        <WindowButtons>
          <Slot $w={16}><Glyph name="minimize" size={11} /></Slot>
          <Slot $w={16}><Glyph name="restore" size={11} /></Slot>
          <Slot $w={14}><Glyph name="close" size={11} /></Slot>
        </WindowButtons>
      </TitleBar>

      <TabBar>
        <FileTab>File</FileTab>
        <Tab $w={42}>Home</Tab>
        <Tab $w={61}>Assemblies</Tab>
        <Tab $w={39}>Curve</Tab>
        <Tab $w={48}>Analysis</Tab>
        <Tab $w={36} $active>View</Tab>
        <Tab $w={44}>Render</Tab>
        <Tab $w={38}>Tools</Tab>
        <Tab $w={62}>Application</Tab>
        <TabRight>
          <FindBox>
            Find a Command
            <Glyph name="lens" size={10} />
          </FindBox>
          <Slot $w={16}><Glyph name="ribbonBox" size={11} /></Slot>
          <Slot $w={18}><Glyph name="chevUp" size={11} /></Slot>
          <Slot $w={18}><Glyph name="help" size={11} /></Slot>
          <Slot $w={10}><Glyph name="minimize" size={11} /></Slot>
          <Slot $w={17}><Glyph name="restore" size={11} /></Slot>
          <Slot $w={14}><Glyph name="close" size={11} /></Slot>
        </TabRight>
      </TabBar>

      <Ribbon>
        <Group $w={41}>
          <GroupBody>
            <BigButton $w={41}>
              <BigIcon><Glyph name="windowBig" size={22} /></BigIcon>
              <BigLabel>Window</BigLabel>
              <LabelCaret />
            </BigButton>
          </GroupBody>
          <GroupFoot />
        </Group>

        <Group $w={131}>
          <GroupBody $pad={6}>
            <IconGrid $cols={3} $cell={16.5}>
              {['viewIso', 'viewPage', 'viewIso2', 'viewFront', 'viewL', 'viewPara', 'viewJ', 'viewRect'].map((n) => (
                <GridCell key={n}><Glyph name={n} size={12} /></GridCell>
              ))}
            </IconGrid>
            <IconGrid $cols={2} $cell={17} $ml={9}>
              <GridCell><Glyph name="fit" size={12} /></GridCell>
              <GridCell><Glyph name="layout" size={12} /></GridCell>
              <GridCell $active><Glyph name="zoomBox" size={12} /></GridCell>
              <GridCell><Glyph name="brush" size={12} /></GridCell>
              <GridCell><Glyph name="rotate" size={12} /></GridCell>
              <GridCell><Glyph name="fade" size={12} /></GridCell>
            </IconGrid>
            <BigButton $w={26} $ml={3}>
              <BigIcon $boxed><Glyph name="moreView" size={12} /></BigIcon>
              <BigLabel>More</BigLabel>
              <LabelCaret />
            </BigButton>
          </GroupBody>
          <GroupFoot>
            <GroupName>Orientation</GroupName>
            <Caret $w={9} />
          </GroupFoot>
        </Group>

        <Group $w={338}>
          <GroupBody $pad={4}>
            <BigButton $w={38}>
              <BigIcon><Glyph name="showHide" size={20} /></BigIcon>
              <BigLabel>{'Show\nand Hide'}</BigLabel>
            </BigButton>
            <HideList>
              <HideItem><Glyph name="immediate" size={11} />Immediate Hide</HideItem>
              <HideItem><Glyph name="hide" size={11} />Hide</HideItem>
              <HideItem><Glyph name="show" size={11} />Show</HideItem>
            </HideList>
            <ListScroll>
              <UpCaret />
              <Caret />
              <Caret />
            </ListScroll>
            <LayerColumn>
              <LayerSelect>1<Caret /></LayerSelect>
              <LayerRow><Glyph name="moveLayer" size={11} />Move to Layer</LayerRow>
              <LayerRow><Glyph name="layerSet" size={11} />Layer Settings</LayerRow>
            </LayerColumn>
            <BigButton $w={30}>
              <BigIcon><Glyph name="editSection" size={21} /></BigIcon>
              <BigLabel>{'Edit\nSection'}</BigLabel>
            </BigButton>
            <BigButton $w={30}>
              <BigIcon><Glyph name="clipSection" size={21} /></BigIcon>
              <BigLabel>{'Clip\nSection'}</BigLabel>
            </BigButton>
            <BigButton $w={36}>
              <BigIcon><Glyph name="seeThru" size={21} /></BigIcon>
              <BigLabel>{'See-Thru\nAll'}</BigLabel>
            </BigButton>
            <BigButton $w={26} $ml={6}>
              <BigIcon $boxed><Glyph name="moreShow" size={14} /></BigIcon>
              <BigLabel>More</BigLabel>
              <LabelCaret />
            </BigButton>
          </GroupBody>
          <GroupFoot>
            <GroupName>Visibility</GroupName>
            <Caret $w={9} />
          </GroupFoot>
        </Group>

        <Group $w={59}>
          <GroupBody $pad={7}>
            <IconGrid $cols={3} $cell={16.5} $rowH={14} $pt={2}>
              {['cubeBlue', 'wire', 'sphere', 'cubeBlue2', 'wire', 'stripes', 'cubeBlue', 'wire'].map((n, i) => (
                <GridCell key={i}><Glyph name={n} size={12} /></GridCell>
              ))}
            </IconGrid>
          </GroupBody>
          <GroupFoot>
            <GroupName>Style</GroupName>
            <Caret $w={9} />
          </GroupFoot>
        </Group>

        <Group $w={127}>
          <GroupBody $pad={8}>
            <BigButton $w={40}>
              <BigIcon><Glyph name="preferences" size={22} /></BigIcon>
              <BigLabel>Preferences</BigLabel>
            </BigButton>
            <BigButton $w={46} $ml={2}>
              <BigIcon><Glyph name="palette" size={22} /></BigIcon>
              <BigLabel>{'Edit Object\nDisplay'}</BigLabel>
            </BigButton>
            <BigButton $w={26}>
              <BigIcon><PngMark>PNG</PngMark></BigIcon>
              <BigLabel>Export</BigLabel>
              <InlineLabel>PNG<Caret /></InlineLabel>
            </BigButton>
          </GroupBody>
          <GroupFoot>
            <GroupName>Visualization</GroupName>
            <Caret $w={9} />
          </GroupFoot>
        </Group>
        <RibbonEnd><Caret /></RibbonEnd>
      </Ribbon>

      <SelectionBar>
        <Glyph name="menuIcon" size={12} />
        <MenuLabel>Menu</MenuLabel>
        <Caret />
        <VSep $w={8} />
        <FilterSelect $w={80} $ml={4}>No Selection Filter<Caret /></FilterSelect>
        <FilterSelect $w={83} $ml={7}>Entire Assembly<Caret /></FilterSelect>
        <Slot $w={3} />
        {toolbar.map(([name, w], i) =>
          name === '^' ? (
            <Caret key={i} $w={w} />
          ) : name === '|' ? (
            <VSep key={i} $w={w} />
          ) : (
            <Slot key={i} $w={w} $active={name.startsWith('*')}>
              <Glyph name={name.replace('*', '')} size={11} />
            </Slot>
          ),
        )}
        <BarEnd><Caret /></BarEnd>
      </SelectionBar>

      <Workspace>
        <Rail>
          {railItems.map((r) => (
            <RailItem key={r.name} $top={r.top} $h={r.h} $active={r.active}>
              <Glyph name={r.name} size={r.size} />
            </RailItem>
          ))}
        </Rail>
        <Panel>
          <PanelHead>
            Part Navigator
            <MaxBox />
          </PanelHead>
          <Table>
            <HeadRow>
              <NameHead>Name</NameHead>
              <StateHead>Up to</StateHead>
            </HeadRow>
            {topRows.map((r, i) => (
              <Row key={r.id} $odd={i % 2 === 1}>
                <NameCell>
                  <TreeCell $w={11} $x={6} $v={i < 4 ? 'full' : 'half'} $h>
                    {r.open !== null && <Expander $open={r.open} />}
                  </TreeCell>
                  {r.icons.map((n) => (
                    <Glyph key={n} name={n} size={n === 'tick' ? 10 : 12} />
                  ))}
                  <RowText>{r.label}</RowText>
                </NameCell>
                <StateCell />
              </Row>
            ))}
            {features.map((f, i) => (
              <Row key={f.label} $odd={(i + 5) % 2 === 1}>
                <NameCell $bold={f.bold}>
                  <TreeCell $w={11} $x={6} />
                  <TreeCell $w={14} $x={9} $v={i < 3 ? 'full' : 'half'} $h />
                  <Glyph name="boxCheck" size={11} />
                  <Glyph name={f.icon} size={11} />
                  <RowText $ml={1}>{f.label}</RowText>
                </NameCell>
                <StateCell><Glyph name="tick" size={10} /></StateCell>
              </Row>
            ))}
            {Array.from({ length: 26 }, (_, i) => (
              <Row key={i} $odd={(i + 9) % 2 === 1}>
                <NameCell />
                <StateCell />
              </Row>
            ))}
          </Table>
          <ScrollBar>
            ‹<Thumb />›
          </ScrollBar>
          <Section>Dependencies<Glyph name="chevDown" size={9} /></Section>
          <Section>Details<Glyph name="chevDown" size={9} /></Section>
          <Section>Preview<Glyph name="chevDown" size={9} /></Section>
        </Panel>
        <Viewport>
          <Part />
          <Watermark>
            <WatermarkTitle>Activate Windows</WatermarkTitle>
            Go to Settings to activate Windows.
          </Watermark>
        </Viewport>
      </Workspace>

      <StatusBar>
        Drag cursor to pan view
        <StatusIcons>
          <Glyph name="statusA" size={11} />
          <Glyph name="statusB" size={11} />
        </StatusIcons>
      </StatusBar>

      <Taskbar>
        <TaskButton><Glyph name="winLogo" size={12} /></TaskButton>
        <TaskButton><Glyph name="search" size={13} /></TaskButton>
        <TaskButton><Glyph name="taskView" size={14} /></TaskButton>
        <TaskButton><Glyph name="edge" size={15} /></TaskButton>
        <TaskButton $active $open><Glyph name="nxApp" size={17} /></TaskButton>
        <TaskButton $open><Glyph name="explorer" size={15} /></TaskButton>
        <Tray>
          <TraySlot $w={16}><Glyph name="caretUp" size={10} /></TraySlot>
          <TraySlot $w={16}><QBadge>Q</QBadge></TraySlot>
          <TraySlot $w={16}><Glyph name="netTray" size={12} /></TraySlot>
          <TraySlot $w={18}><Glyph name="speaker" size={12} /></TraySlot>
          <TraySlot $w={19}>ENG</TraySlot>
          <Clock>8:33 PM<br />17-06-2018</Clock>
          <DesktopEdge />
        </Tray>
      </Taskbar>
    </Page>
  );
}
